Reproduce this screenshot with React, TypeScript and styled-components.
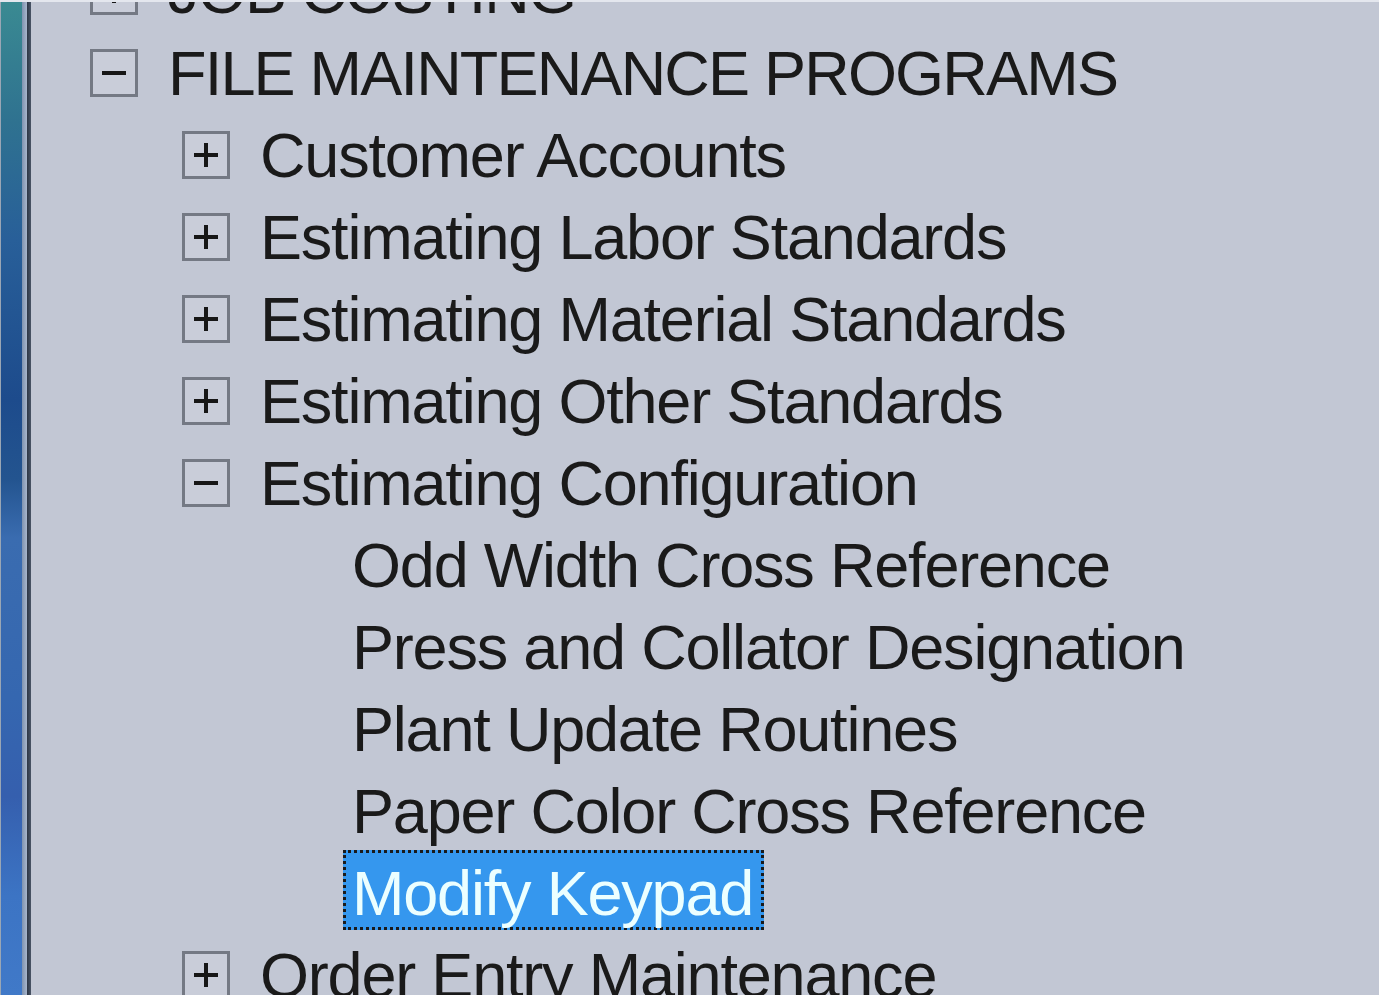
import React from "react";
import styled, { createGlobalStyle, css } from "styled-components";

const GlobalStyle = createGlobalStyle`
  html, body {
    margin: 0;
    padding: 0;
    background: #c2c7d4;
  }
  #root {
    height: 995px;
  }
`;

const Frame = styled.div`
  display: flex;
  width: 1379px;
  height: 995px;
  overflow: hidden;
  border-top: 2px solid #e4e7ee;
  box-sizing: border-box;
  background: #c2c7d4;
`;

const SideEdge = styled.div`
  display: flex;
  flex: none;
  height: 100%;
`;

const EdgeLip = styled.div`
  width: 1px;
  background: #9aa6b4;
`;

const BlueBar = styled.div`
  width: 21px;
  background: linear-gradient(
    180deg,
    #3a8a92 0%,
    #2f7290 12%,
    #285f99 24%,
    #1d4b8c 40%,
    #23548f 48%,
    #3a6cb0 54%,
    #3567b0 70%,
    #355fae 80%,
    #3c74c4 90%,
    #4079c8 100%
  );
`;

const LightStripe = styled.div`
  width: 5px;
  background: linear-gradient(90deg, #7f93b0, #a8b6cc);
`;

const DarkLine = styled.div`
  width: 4px;
  background: linear-gradient(90deg, #2c3646, #4a5566);
`;

const Pane = styled.div`
  flex: 1;
  height: 100%;
  overflow: hidden;
  background: #c2c7d4;
  font-family: "Liberation Sans", Arial, sans-serif;
`;

const TreeList = styled.ul`
  list-style: none;
  margin: -55px 0 0 0;
  padding: 0 0 0 59px;
`;

const Row = styled.li<{ $level: number }>`
  display: flex;
  align-items: center;
  height: 82px;
  padding-left: ${(p) => p.$level * 92}px;
  gap: 27px;
`;

const ExpandBox = styled.span<{ $hidden?: boolean }>`
  position: relative;
  flex: none;
  width: 48px;
  height: 48px;
  box-sizing: border-box;
  margin-top: 5px;
  border: 3px solid #747984;
  background: #c9cdd9;
  ${(p) =>
    p.$hidden &&
    css`
      visibility: hidden;
    `}
`;

const HBar = styled.span`
  position: absolute;
  left: 9px;
  top: 19px;
  width: 24px;
  height: 4px;
  background: #161616;
`;

const VBar = styled.span`
  position: absolute;
  left: 19px;
  top: 9px;
  width: 4px;
  height: 24px;
  background: #161616;
`;

const Label = styled.span<{ $selected?: boolean; $caps?: boolean }>`
  display: inline-block;
  font-size: 63px;
  letter-spacing: ${(p) => (p.$caps ? "-1.8px" : "-1.2px")};
  line-height: 80px;
  height: 80px;
  padding: 0 8px 0 6px;
  margin-left: -6px;
  white-space: nowrap;
  color: #1a1a1a;
  box-sizing: border-box;
  border: 3px solid transparent;
  ${(p) =>
    p.$selected &&
    css`
      background: #3597ee;
      color: #ecffff;
      border: 3px dotted #1a1a1a;
    `}
`;

type Node = {
  level: number;
  text: string;
  toggle?: "plus" | "minus";
  selected?: boolean;
};

const nodes: Node[] = [
  { level: 0, text: "JOB COSTING", toggle: "plus" },
  { level: 0, text: "FILE MAINTENANCE PROGRAMS", toggle: "minus" },
  { level: 1, text: "Customer Accounts", toggle: "plus" },
  { level: 1, text: "Estimating Labor Standards", toggle: "plus" },
  { level: 1, text: "Estimating Material Standards", toggle: "plus" },
  { level: 1, text: "Estimating Other Standards", toggle: "plus" },
  { level: 1, text: "Estimating Configuration", toggle: "minus" },
  { level: 2, text: "Odd Width Cross Reference" },
  { level: 2, text: "Press and Collator Designation" },
  { level: 2, text: "Plant Update Routines" },
  { level: 2, text: "Paper Color Cross Reference" },
  { level: 2, text: "Modify Keypad", selected: true },
  { level: 1, text: "Order Entry Maintenance", toggle: "plus" },
];

export default function App() {
  return (
    <>
      <GlobalStyle />
      <Frame>
        <SideEdge>
          <EdgeLip />
          <BlueBar />
          <LightStripe />
          <DarkLine />
        </SideEdge>
        <Pane>
          <TreeList>
            {nodes.map((n, i) => (
              <Row key={i} $level={n.level}>
                <ExpandBox $hidden={!n.toggle}>
                  <HBar />
                  {n.toggle === "plus" && <VBar />}
                </ExpandBox>
                <Label $selected={n.selected} $caps={n.level === 0}>
                  {n.text}
                </Label>
              </Row>
            ))}
          </TreeList>
        </Pane>
      </Frame>
    </>
  );
}
